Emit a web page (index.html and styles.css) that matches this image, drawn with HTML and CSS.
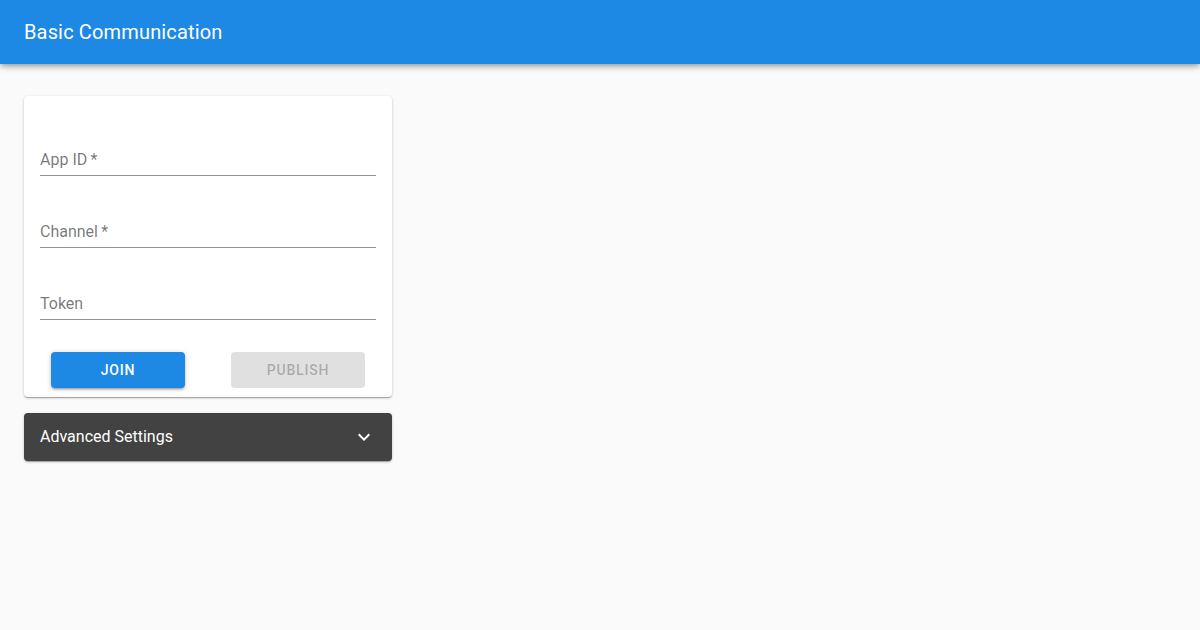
FILE: index.html
```html
<!DOCTYPE html>
<html>
<head>
<meta charset="utf-8">
<link rel="stylesheet" href="styles.css">
</head>
<body>
<header class="appbar">
  <h1 class="title">Basic Communication</h1>
</header>
<main class="content">
  <div class="column">
    <section class="card">
      <form class="fields">
        <div class="field">
          <label class="label">App ID&#8201;*</label>
          <input class="input" type="text">
        </div>
        <div class="field">
          <label class="label">Channel&#8201;*</label>
          <input class="input" type="text">
        </div>
        <div class="field">
          <label class="label">Token</label>
          <input class="input" type="text">
        </div>
      </form>
      <div class="actions">
        <button class="btn btn-primary" type="button">Join</button>
        <button class="btn btn-disabled" type="button" disabled>Publish</button>
      </div>
    </section>
    <section class="panel">
      <span class="panel-title">Advanced Settings</span>
      <svg class="panel-icon" viewBox="0 0 24 24" width="24" height="24"><path d="M16.59 8.59L12 13.17 7.41 8.59 6 10l6 6 6-6z" fill="#ffffff"/></svg>
    </section>
  </div>
</main>
</body>
</html>
```
FILE: styles.css
```css
* { box-sizing: border-box; }
html, body {
  margin: 0;
  padding: 0;
  background: #fafafa;
  font-family: Roboto, "Liberation Sans", Arial, sans-serif;
  width: 1200px;
  height: 630px;
  overflow: hidden;
}
.appbar {
  height: 64px;
  background: #1e88e5;
  display: flex;
  align-items: center;
  padding: 0 24px;
  box-shadow: 0 2px 4px -1px rgba(0,0,0,0.2), 0 4px 5px 0 rgba(0,0,0,0.14), 0 1px 10px 0 rgba(0,0,0,0.12);
  position: relative;
  z-index: 2;
}
.title {
  margin: 0;
  color: #ffffff;
  font-size: 20px;
  font-weight: 400;
  line-height: 1.6;
  letter-spacing: 0.0075em;
}
.content {
  padding: 32px 24px;
}
.column {
  width: 368px;
  display: flex;
  flex-direction: column;
  gap: 16px;
}
.card {
  background: #ffffff;
  border-radius: 4px;
  box-shadow: 0 1px 3px 0 rgba(0,0,0,0.2), 0 1px 1px 0 rgba(0,0,0,0.14), 0 2px 1px -1px rgba(0,0,0,0.12);
  padding: 16px 0 9px;
}
.fields {
  margin: 0;
  padding: 0 16px;
  display: flex;
  flex-direction: column;
}
.field {
  position: relative;
  margin: 16px 0 8px;
  padding-top: 16px;
  height: 48px;
}
.label {
  position: absolute;
  left: 0;
  top: 24px;
  font-size: 16px;
  line-height: 1;
  color: rgba(0,0,0,0.54);
  pointer-events: none;
}
.input {
  display: block;
  width: 100%;
  height: 32px;
  border: 0;
  border-bottom: 1px solid rgba(0,0,0,0.42);
  padding: 6px 0 7px;
  font: inherit;
  font-size: 16px;
  background: transparent;
  outline: none;
}
.actions {
  margin-top: 24px;
  padding: 0 4px;
  display: flex;
  justify-content: space-around;
}
.btn {
  width: 134px;
  height: 36px;
  border: 0;
  border-radius: 4px;
  font-family: Roboto, "Liberation Sans", Arial, sans-serif;
  font-size: 14px;
  font-weight: 500;
  letter-spacing: 0.06em;
  text-transform: uppercase;
  padding: 6px 16px;
}
.btn-primary {
  background: #1e88e5;
  color: #ffffff;
  box-shadow: 0 1px 5px 0 rgba(0,0,0,0.2), 0 2px 2px 0 rgba(0,0,0,0.14), 0 3px 1px -2px rgba(0,0,0,0.12);
}
.btn-disabled {
  background: rgba(0,0,0,0.12);
  color: rgba(0,0,0,0.26);
}
.panel {
  height: 48px;
  background: #424242;
  border-radius: 4px;
  box-shadow: 0 1px 3px 0 rgba(0,0,0,0.2), 0 1px 1px 0 rgba(0,0,0,0.14), 0 2px 1px -1px rgba(0,0,0,0.12);
  display: flex;
  align-items: center;
  justify-content: space-between;
  padding: 0 16px;
}
.panel-title {
  color: #ffffff;
  font-size: 16px;
  line-height: 1.5;
}
.panel-icon {
  display: block;
}
```
